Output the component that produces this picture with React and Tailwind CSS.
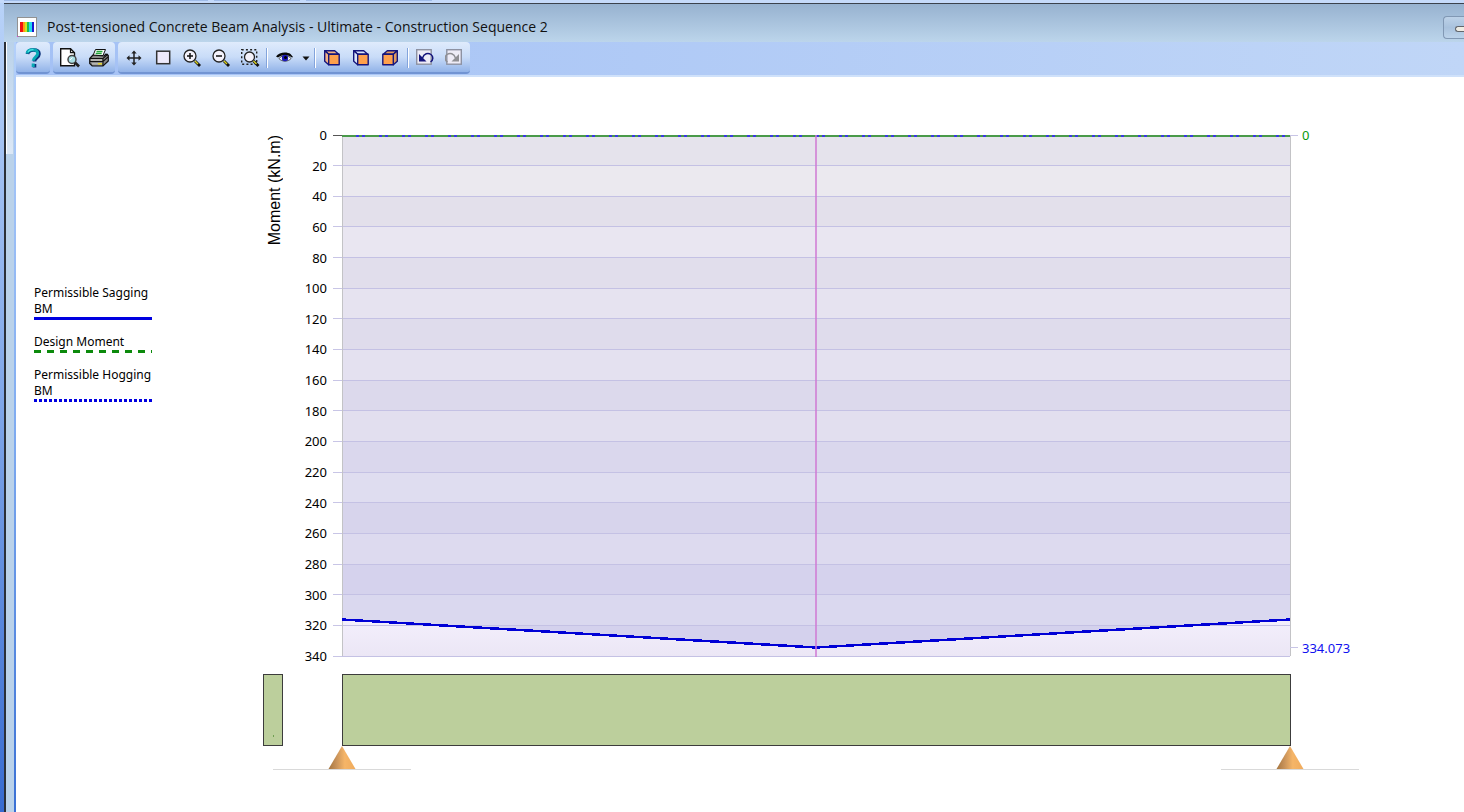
import React from 'react';

const TICKS = [0, 20, 40, 60, 80, 100, 120, 140, 160, 180, 200, 220, 240, 260, 280, 300, 320, 340];

const BANDS = [
    '#e5e3ec', '#ebe9ef', '#e3e0eb', '#e9e6f1', '#e1deec', '#e6e3f0', '#dfdcec', '#e4e1f0', '#dcd9ec',
    '#e2dfef', '#dad7ed', '#dfddf0', '#d7d4ec', '#dddaef', '#d5d2ed', '#dad8ef', '#d4d1ed',
];

const LEGEND = [
    { label: 'Permissible Sagging BM', color: '#0000e0', width: 3, dash: '' },
    { label: 'Design Moment', color: '#0c8a0c', width: 3, dash: '7 6' },
    { label: 'Permissible Hogging BM', color: '#0000e0', width: 3, dash: '3 2' },
];

const PLOT_HEIGHT = 522;
const tickY = i => Math.floor(i * 30.65);

const Icon = ({ children, className = 'h-5 w-5' }) => (
    <svg viewBox="0 0 20 20" className={className} fill="none" aria-hidden="true">{children}</svg>
);

const Lens = ({ x, y, r = 5 }) => (
    <>
        <circle cx={x} cy={y} r={r} fill="#f4f2fb" stroke="#222" strokeWidth="1.3" />
        <path d={`M${x + r - 1} ${y + r - 1}l5 5`} stroke="#111" strokeWidth="2.8" />
        <path d={`M${x + r - 1} ${y + r - 1}l3 3`} stroke="#d8d020" strokeWidth="1.4" />
    </>
);

const HelpIcon = () => (
    <Icon>
        <path d="M4.5 6C5 3.2 7.500 2 10.500 2c3.500 0 5.500 1.500 5.500 4 0 3.500-4.500 3.800-4.500 7.500M11.500 16v3.500" stroke="#0a2f78" strokeWidth="3.600" />
        <path d="M4 5.500C4.500 2.600 6.500 1.700 9.500 1.700c3.300 0 5.200 1.300 5.200 3.800 0 3.400-4.500 3.800-4.500 7.300M10.200 15.500V19" stroke="#08a9b4" strokeWidth="3" />
        <path d="M5 3.800C6.500 1.500 9 1.500 10.500 1.600" stroke="#4fe3e6" strokeWidth="1.200" />
    </Icon>
);

const PreviewIcon = () => (
    <Icon>
        <path d="M.7 .7h9.800l4 4v13H.7z" fill="#fff" stroke="#111" strokeWidth="1.400" />
        <path d="M10.500 .7v4h4" stroke="#111" strokeWidth="1.200" />
        <circle cx="12" cy="11.500" r="4" fill="#a9dfe5" stroke="#444" strokeWidth="1.500" />
        <path d="M10 12l2.500-2.500" stroke="#fff" />
        <path d="M15 14.500l4 4" stroke="#222" strokeWidth="2.600" />
    </Icon>
);

const PrinterIcon = () => (
    <Icon>
        <path d="M6.500 1.500h10l-2.500 6H4z" fill="#fff" stroke="#111" />
        <path d="M7.500 3.500h6M6.700 5.500h6" stroke="#22a43a" strokeWidth="1.400" />
        <path d="M4 7L.7 10.500v5l2.500 2.500H14l5.300-5V7.500L17 6l-2 2z" fill="#888" stroke="#111" strokeWidth="1.200" />
        <path d="M1 10.500h13l5-4.500M1 13.500h13l5-4.500M14 10.500V18" stroke="#111" strokeWidth="1.100" />
        <path d="M2 12h11M3 15.800h10" stroke="#c4c4c0" strokeWidth="1.300" />
        <path d="M9 15.800h4" stroke="#e3d62a" strokeWidth="1.500" />
    </Icon>
);

const MoveIcon = () => (
    <Icon>
        <path d="M10 4v12M4 10h12" stroke="#222" strokeWidth="1.500" />
        <path d="M10 2.500l2.700 3H7.300zM10 17.500l-2.700-3h5.400zM2.500 10l3-2.700v5.400zM17.500 10l-3 2.700V7.300z" fill="#222" />
    </Icon>
);

const FrameIcon = () => (
    <Icon><rect x="3.700" y="3.200" width="13" height="12.500" fill="#eeeafb" stroke="#333" strokeWidth="1.500" /></Icon>
);

const ZoomInIcon = () => (
    <Icon><Lens x={8} y={8} r={6} /><path d="M5 8h6M8 5v6" stroke="#111" strokeWidth="1.500" /></Icon>
);

const ZoomOutIcon = () => (
    <Icon><Lens x={8} y={8} r={6} /><path d="M5 8h6" stroke="#111" strokeWidth="1.500" /></Icon>
);

const ZoomAreaIcon = () => (
    <Icon>
        <rect x="1.700" y="1.700" width="15" height="14.500" stroke="#222" strokeWidth="1.400" strokeDasharray="2 2.200" />
        <Lens x={9.5} y={9} />
    </Icon>
);

const EyeIcon = () => (
    <Icon>
        <path d="M1 8.500C4 4 12 3.500 15.500 6L18 9l-1 .5C13 6 7 6 3 9.500z" fill="#080808" />
        <path d="M4 10.500c3-4 10-3.500 12 0-3 3.500-9 3.500-12 0z" fill="#fff" stroke="#222" strokeWidth=".8" />
        <circle cx="10" cy="10" r="3.200" fill="#1a18b8" />
        <circle cx="10.500" cy="9.500" r="1.500" fill="#000" />
    </Icon>
);

const CubeIcon = ({ side, flip }) => (
    <Icon>
        <g transform={flip ? 'translate(18 0) scale(-1 1)' : undefined} stroke="#15157c" strokeWidth="1.400" strokeLinejoin="round">
            <path d="M1.700 2.700h10l4 3.500H5.700z" fill={side} />
            <path d="M1.700 2.700l4 3.500v10.500l-4-3.500z" fill={side} />
            <rect x="5.700" y="6.200" width="10.500" height="10.500" fill="#ffa04c" />
        </g>
    </Icon>
);

const TurnIcon = ({ color, flip }) => (
    <Icon>
        <g transform={flip ? 'translate(17 0) scale(-1 1)' : undefined}>
            <rect x=".7" y="1.700" width="14.500" height="14.500" fill="#eeecf7" stroke="#8d92a2" strokeWidth="1.400" />
            <path d="M6.500 10C8 5.500 12 4.500 15 6.500c2.500 2 2.500 5.500-.5 7.500" stroke={color} strokeWidth="1.500" />
            <path d="M3 6v7.500h7.500z" fill={color} />
        </g>
    </Icon>
);

const ToolButton = ({ label, disabled, children }) => (
    <button type="button" aria-label={label} disabled={disabled} className="flex h-full w-[29px] items-center justify-center">
        {children}
    </button>
);

const ToolGroup = ({ className, children }) => (
    <div className={`flex h-8 items-center rounded border-b-2 border-[#7194d3] bg-linear-to-b from-[#dfebfc] via-[#c9dcf8] to-[#92b3e8] pt-[2px] ${className}`}>
        {children}
    </div>
);

const Separator = () => (
    <div className="flex w-[6px] justify-center">
        <div className="h-5 w-[2px] border-r border-white bg-[#83a4dc]" />
    </div>
);

const Support = ({ id }) => (
    <svg viewBox="0 0 138 24" className="h-6 w-[138px]" aria-hidden="true">
        <defs>
            <linearGradient id={id}>
                <stop offset="0" stopColor="#a5753f" />
                <stop offset=".3" stopColor="#c9935a" />
                <stop offset=".6" stopColor="#f5b568" />
                <stop offset="1" stopColor="#f0ab5c" />
            </linearGradient>
        </defs>
        <path d="M0 23.500h138" stroke="#d9d9d9" />
        <path d="M69 0l13.500 23h-27z" fill={`url(#${id})`} />
    </svg>
);

function Toolbar() {
    return (
        <div className="flex h-[35px] items-start gap-[3px] border-b-2 border-[#cfe1fa] bg-linear-to-r from-[#a4c1f5] to-[#c0d6f7]">
            <ToolGroup className="w-[34px] justify-center">
                <ToolButton label="Help"><HelpIcon /></ToolButton>
            </ToolGroup>
            <ToolGroup className="px-[2px]">
                <ToolButton label="Print preview"><PreviewIcon /></ToolButton>
                <ToolButton label="Print"><PrinterIcon /></ToolButton>
            </ToolGroup>
            <ToolGroup className="px-px">
                <ToolButton label="Pan"><MoveIcon /></ToolButton>
                <ToolButton label="Fit to window"><FrameIcon /></ToolButton>
                <ToolButton label="Zoom in"><ZoomInIcon /></ToolButton>
                <ToolButton label="Zoom out"><ZoomOutIcon /></ToolButton>
                <ToolButton label="Zoom area"><ZoomAreaIcon /></ToolButton>
                <Separator />
                <ToolButton label="View"><EyeIcon /></ToolButton>
                <button type="button" aria-label="View options" className="flex h-full w-[13px] items-center justify-center">
                    <svg viewBox="0 0 8 5" className="h-[5px] w-2" aria-hidden="true"><path d="M.5 .5h7L4 4.500z" fill="#111" /></svg>
                </button>
                <Separator />
                <ToolButton label="Solid view"><CubeIcon side="#f5b184" /></ToolButton>
                <ToolButton label="Front view"><CubeIcon side="#dce6fa" /></ToolButton>
                <ToolButton label="Side view"><CubeIcon side="#e09a62" flip /></ToolButton>
                <Separator />
                <ToolButton label="Undo"><TurnIcon color="#15157c" /></ToolButton>
                <ToolButton label="Redo" disabled><TurnIcon color="#8f8f94" flip /></ToolButton>
            </ToolGroup>
        </div>
    );
}

function Legend() {
    return (
        <ul className="w-[247px] shrink-0 space-y-4 pt-[208px] pl-[18px] font-['Noto_Sans'] text-xs leading-4">
            {LEGEND.map(item => (
                <li key={item.label} className="w-[118px]">
                    <p className="w-[122px]">{item.label}</p>
                    <svg className="-mb-[2px] h-[3px] w-full" aria-hidden="true">
                        <line x1="0" x2="118" y1="1.5" y2="1.5" stroke={item.color} strokeWidth={item.width} strokeDasharray={item.dash} />
                    </svg>
                </li>
            ))}
        </ul>
    );
}

function Plot() {
    return (
        <svg viewBox="0 0 948 522" preserveAspectRatio="none" className="h-full w-full overflow-visible" shapeRendering="crispEdges" role="img" aria-label="Bending moment envelope">
            <defs>
                <linearGradient id="below" x1="0" y1="0" x2="0" y2="1">
                    <stop offset="0" stopColor="#f3effc" />
                    <stop offset="1" stopColor="#ebe6f5" />
                </linearGradient>
            </defs>
            {BANDS.map((fill, i) => (
                <rect key={i} x="0" y={tickY(i)} width="948" height={tickY(i + 1) - tickY(i)} fill={fill} />
            ))}
            <path d="M0 485L474 512.500 948 485V522H0z" fill="url(#below)" />
            {TICKS.map((t, i) => (
                <line key={t} x1="0" x2="948" y1={tickY(i) + 0.5} y2={tickY(i) + 0.5} stroke="#c4c1e4" />
            ))}
            <path d="M.5 0v521M948.500 0v521" stroke="#c3c3c6" />
            <path d="M0 .5h948" stroke="#3a3ae0" strokeWidth="2" />
            <path d="M0 .5h948" stroke="#4a9a4a" strokeWidth="2" strokeDasharray="14 3 3 3" />
            <path d="M0 484.500L474 512.500 948 484.500" fill="none" stroke="#0000d6" strokeWidth="2.500" />
            <path d="M474 0v522" stroke="#cf79d3" strokeWidth="1.500" shapeRendering="auto" />
        </svg>
    );
}

function Chart() {
    return (
        <div className="grid min-w-0 flex-1 grid-cols-[20px_44px_15px_1fr_8px_166px] grid-rows-[522px_auto] gap-y-[17px] pt-[58px] font-['Noto_Sans'] text-[13px] leading-4">
            <div className="w-6 rotate-180 self-start text-center font-['Liberation_Sans'] text-base leading-6 [writing-mode:vertical-rl]">Moment (kN.m)</div>
            <div className="-mt-2 -mb-[7px] flex flex-col justify-between text-right">
                {TICKS.map(t => <span key={t}>{t}</span>)}
            </div>
            <svg viewBox={`0 0 15 ${PLOT_HEIGHT}`} className="h-full w-full" aria-hidden="true">
                {TICKS.map((t, i) => (
                    <line key={t} x1="6" x2="15" y1={tickY(i) + 0.5} y2={tickY(i) + 0.5} stroke={i === 0 ? '#555' : '#c8c5e6'} />
                ))}
            </svg>
            <Plot />
            <svg viewBox={`0 0 8 ${PLOT_HEIGHT}`} className="h-full w-full" aria-hidden="true">
                <path d="M0 .5h8M0 512.500h8" stroke="#c8c5e6" />
            </svg>
            <div className="-mt-2 mb-px flex flex-col justify-between pl-1">
                <span className="text-[#0a9a0a]">0</span>
                <span className="text-[#1010f0]">334.073</span>
            </div>

            <div className="flex h-[72px] items-end justify-center border border-[#3c3c3c] bg-[#bccf9c] pb-2">
                <div className="h-[2px] w-px bg-[#6f9f52]" />
            </div>
            <div className="col-start-4">
                <div className="-mr-px h-[72px] border border-[#3c3c3c] bg-[#bccf9c]" />
                <div className="-mx-[69px] flex justify-between">
                    <Support id="left-support" />
                    <Support id="right-support" />
                </div>
            </div>
        </div>
    );
}

export default function App() {
    return (
        <div className="flex min-h-screen flex-col overflow-hidden bg-white text-black">
            <div className="flex h-[3px] gap-[6px] bg-[#c5dafa] pl-1">
                <div className="h-px w-[204px] bg-[#9fbbe8]" />
                <div className="h-px w-[86px] bg-[#9fbbe8]" />
                <div className="h-px w-[126px] bg-[#9fbbe8]" />
            </div>
            <div className="flex flex-1">
                <div className="w-1 shrink-0 bg-linear-to-b from-[#b8d2f8] via-[#7fa6e8] to-[#386bd0]" />
                <div className="flex min-w-0 flex-1 flex-col">
                    <header className="flex h-[39px] items-center border-t border-[#3b424d] bg-linear-to-b from-[#97b2d0] to-[#bcd5eb] pt-2 pl-[13px]">
                        <svg viewBox="0 0 20 20" className="h-5 w-5" aria-hidden="true">
                            <rect x=".5" y=".5" width="19" height="19" fill="#fff" stroke="#929292" />
                            <path d="M3 5h3v10H3z" fill="#f01010" />
                            <path d="M6 5h2v10H6z" fill="#ff9a10" />
                            <path d="M8 5h2v10H8z" fill="#c8e820" />
                            <path d="M10 5h2v10h-2z" fill="#20b850" />
                            <path d="M12 5h3v10h-3z" fill="#20d8f0" />
                            <path d="M15 5h2v10h-2z" fill="#1818d0" />
                            <path d="M0 19h1v1H0z" fill="#e040d0" />
                        </svg>
                        <h1 className="ml-[10px] flex-1 font-['Open_Sans'] text-sm whitespace-nowrap text-[#111]">
                            Post-tensioned Concrete Beam Analysis - Ultimate - Construction Sequence 2
                        </h1>
                        <button type="button" aria-label="Minimize" className="flex h-[23px] w-[21px] items-center justify-end rounded-l border border-r-0 border-[#8198b4] bg-linear-to-b from-[#bdd2e8] via-[#a9c2dd] to-[#bcd3ea] pt-1">
                            <span className="h-[6px] w-[9px] rounded-l-sm border border-r-0 border-[#62666c] bg-[#eeece4]" />
                        </button>
                    </header>
                    <div className="flex flex-1">
                        <div className="w-[10px] shrink-0 border-l-2 border-[#2b3038] bg-[#bad2ea]">
                            <div className="h-[112px] w-[7px] border-l border-white bg-linear-to-b from-[#bad2ea] to-[#dce8f6]" />
                        </div>
                        <div className="w-[2px] shrink-0 bg-linear-to-b from-[#b4d0fa] via-[#7fabf0] to-[#3a70d4]" />
                        <div className="min-w-0 flex-1">
                            <Toolbar />
                            <main className="flex">
                                <Legend />
                                <Chart />
                            </main>
                        </div>
                    </div>
                </div>
            </div>
        </div>
    );
}
